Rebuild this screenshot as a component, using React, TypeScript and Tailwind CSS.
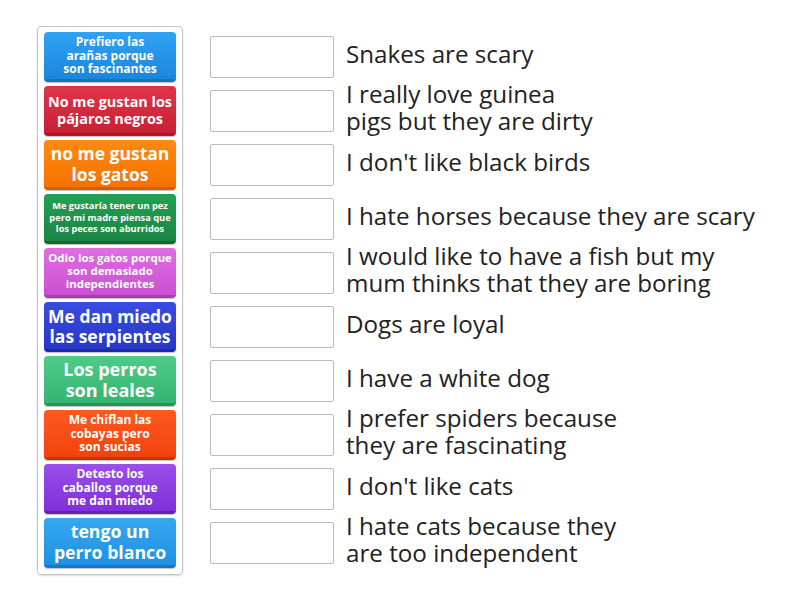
import React from "react";

type Tile = { lines: string[]; fs: number; lh: number; from: string; to: string; edge: string };

const tiles: Tile[] = [
  { lines: ["Prefiero las", "arañas porque", "son fascinantes"], fs: 12, lh: 13.5, from: "#2fa3f5", to: "#1b86dc", edge: "#1473c2" },
  { lines: ["No me gustan los", "pájaros negros"], fs: 14.4, lh: 17, from: "#e0344a", to: "#c91f35", edge: "#a8182a" },
  { lines: ["no me gustan", "los gatos"], fs: 17.5, lh: 21, from: "#ff8a10", to: "#f57200", edge: "#d45f00" },
  { lines: ["Me gustaría tener un pez", "pero mi madre piensa que", "los peces son aburridos"], fs: 9.3, lh: 11.5, from: "#24a053", to: "#1a8543", edge: "#126a33" },
  { lines: ["Odio los gatos porque", "son demasiado", "independientes"], fs: 11.4, lh: 12.8, from: "#de6fe2", to: "#cb4fd2", edge: "#a83cb0" },
  { lines: ["Me dan miedo", "las serpientes"], fs: 17.5, lh: 20, from: "#3a4de0", to: "#2636c8", edge: "#1c2aa6" },
  { lines: ["Los perros", "son leales"], fs: 18, lh: 20.5, from: "#4fcb8a", to: "#34b571", edge: "#25945a" },
  { lines: ["Me chiflan las", "cobayas pero", "son sucias"], fs: 12, lh: 13.5, from: "#ff5a22", to: "#f2420c", edge: "#cc3406" },
  { lines: ["Detesto los", "caballos porque", "me dan miedo"], fs: 12, lh: 13.5, from: "#9a4eea", to: "#7f30d8", edge: "#6422b3" },
  { lines: ["tengo un", "perro blanco"], fs: 17.7, lh: 21, from: "#36a8f0", to: "#1e90e2", edge: "#1677c2" },
];

const answers: string[][] = [
  ["Snakes are scary"],
  ["I really love guinea", "pigs but they are dirty"],
  ["I don't like black birds"],
  ["I hate horses because they are scary"],
  ["I would like to have a fish but my", "mum thinks that they are boring"],
  ["Dogs are loyal"],
  ["I have a white dog"],
  ["I prefer spiders because", "they are fascinating"],
  ["I don't like cats"],
  ["I hate cats because they", "are too independent"],
];

export default function App() {
  return (
    <div
      className="w-[800px] h-[600px] bg-white flex items-start pl-[37px] pt-[26px]"
      style={{ fontFamily: '"Open Sans", "Noto Sans", sans-serif' }}
    >
      <div className="w-[146px] h-[549px] border border-[#c4c4c4] rounded-[4px] shadow-[0_1px_2px_rgba(0,0,0,0.15)] px-[6px] pt-[5px] flex flex-col gap-[4px]">
        {tiles.map((t, i) => (
          <div
            key={i}
            className="h-[50px] w-[132px] rounded-[4px] flex flex-col items-center justify-center text-white font-bold text-center shadow-[0_1px_1px_rgba(0,0,0,0.25)]"
            style={{
              background: `linear-gradient(${t.from}, ${t.to})`,
              borderBottom: `3px solid ${t.edge}`,
              fontSize: `${t.fs}px`,
              lineHeight: `${t.lh}px`,
            }}
          >
            {t.lines.map((l, j) => (
              <span key={j} className="whitespace-nowrap">{l}</span>
            ))}
          </div>
        ))}
      </div>
      <div className="ml-[27px] pt-[6px] flex flex-col gap-[4px]">
        {answers.map((a, i) => (
          <div key={i} className="h-[50px] flex items-center gap-[12px]">
            <div className="w-[124px] h-[42px] border border-[#bdbdbd] rounded-[2px] bg-white shrink-0" />
            <div className="text-[24.2px] leading-[27px] text-[#222] -mt-[8px] flex flex-col">
              {a.map((l, j) => (
                <span key={j} className="whitespace-nowrap">{l}</span>
              ))}
            </div>
          </div>
        ))}
      </div>
    </div>
  );
}
